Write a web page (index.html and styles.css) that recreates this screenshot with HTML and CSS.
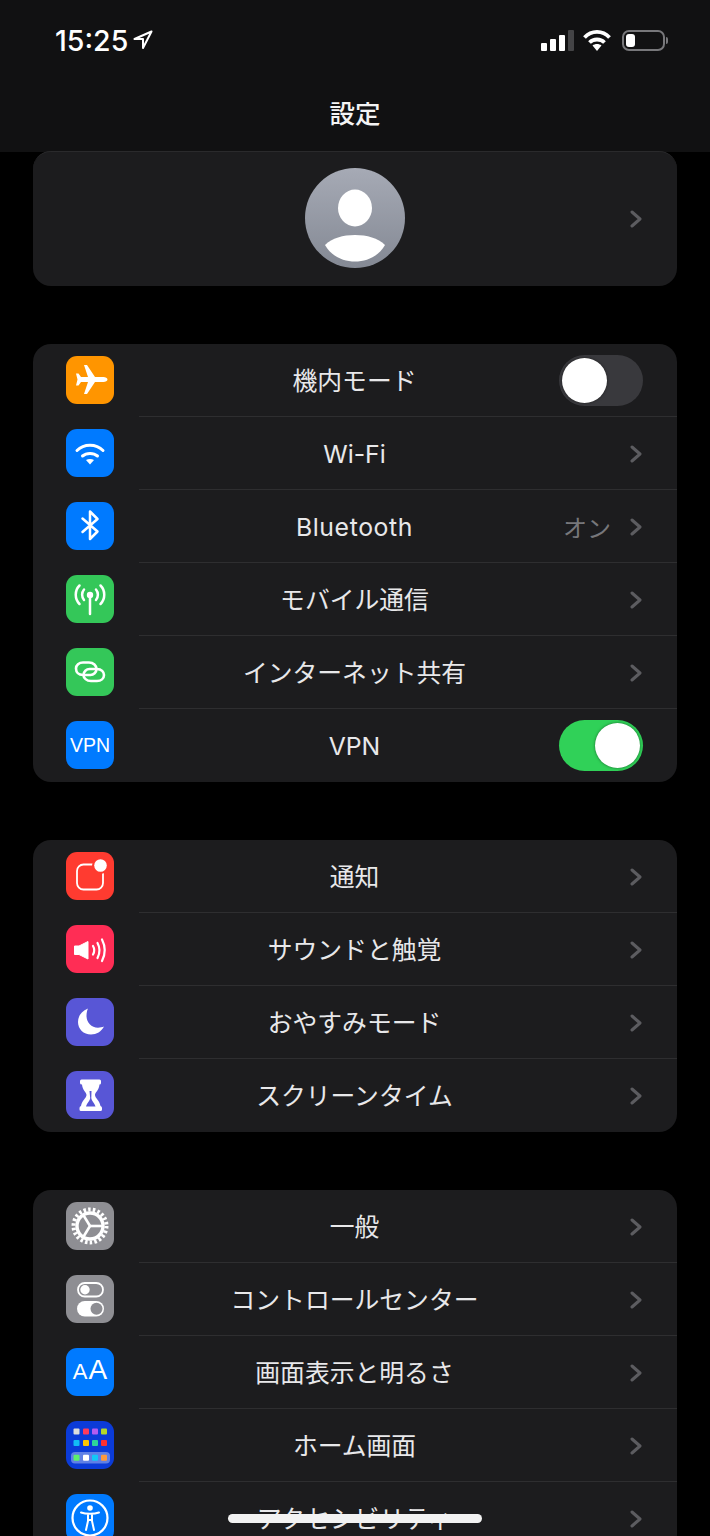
FILE: index.html
```html
<!DOCTYPE html>
<html lang="ja">
<head>
<meta charset="utf-8">
<title>設定</title>
<link rel="stylesheet" href="styles.css">
</head>
<body>
<header class="nav">
  <div class="status">
    <div class="status-left">
      <span class="time">15:25</span>
      <svg class="loc" viewBox="0 0 20 20"><path d="M18.500 1.500 L1.500 9 H10 V18 Z" fill="none" stroke="#fff" stroke-width="2" stroke-linejoin="round"/></svg>
    </div>
    <div class="status-right">
      <div class="signal"><i class="bar b1"></i><i class="bar b2"></i><i class="bar b3"></i><i class="bar b4"></i></div>
      <svg class="wifi" viewBox="0 0 28 22"><g fill="none" stroke="#fff" stroke-width="3.800"><path d="M1.500 8.500 C8.500 1 19.500 1 26.500 8.500"/><path d="M6.500 13.500 C10.500 9.500 17.500 9.500 21.500 13.500"/></g><path d="M9.500 16.500 C12 14.500 16 14.500 18.500 16.500 L14 22 Z" fill="#fff"/></svg>
      <div class="battery"><i class="charge"></i></div>
      <i class="nub"></i>
    </div>
  </div>
  <h1 class="title">設定</h1>
</header>

<section class="card profile">
  <span></span>
  <svg class="avatar" viewBox="0 0 100 100">
    <defs><linearGradient id="av" x1="0" y1="0" x2="0" y2="1"><stop offset="0" stop-color="#a6aab5"/><stop offset="1" stop-color="#848994"/></linearGradient></defs>
    <circle cx="50" cy="50" r="50" fill="url(#av)"/>
    <ellipse cx="50" cy="40" rx="17" ry="18.500" fill="#fff"/>
    <path d="M20 77 C27 70 38 67 50 67 C62 67 73 70 80 77 C74 88 62 93.500 50 93.500 C38 93.500 26 88 20 77 Z" fill="#fff"/>
  </svg>
  <div class="trail"><svg class="chev" viewBox="0 0 12 18"><path d="M2 2 L10 9 L2 16"/></svg></div>
</section>

<section class="card group">
  <div class="row">
    <svg class="tile" viewBox="0 0 48 48"><rect width="48" height="48" rx="11" fill="#ff9500"/><path d="M41.500 23.500 C41.500 22 39.500 21 37.500 21 H29 L21 9 H18 L22 21 H15 L12.500 17.500 H10 L11.500 23.500 L10 29.500 H12.500 L15 26 H22 L18 38 H21 L29 26 H37.500 C39.500 26 41.500 25 41.500 23.500 Z" fill="#fff"/></svg>
    <span class="label">機内モード</span>
    <div class="trail"><div class="toggle off"><i class="knob"></i></div></div>
  </div>
  <div class="sep"></div>
  <div class="row">
    <svg class="tile" viewBox="0 0 48 48"><rect width="48" height="48" rx="11" fill="#007aff"/><g fill="none" stroke="#fff" stroke-width="3" stroke-linecap="round"><path d="M11 21.500 C18 14.500 30 14.500 37 21.500"/><path d="M16.500 27 C20.500 23.500 27.500 23.500 31.500 27"/></g><path d="M20 31 C22.500 29.500 25.500 29.500 28 31 L24 35.500 Z" fill="#fff"/></svg>
    <span class="label">Wi-Fi</span>
    <div class="trail"><svg class="chev" viewBox="0 0 12 18"><path d="M2 2 L10 9 L2 16"/></svg></div>
  </div>
  <div class="sep"></div>
  <div class="row">
    <svg class="tile" viewBox="0 0 48 48"><rect width="48" height="48" rx="11" fill="#007aff"/><path d="M16.500 16.500 L31.500 29.500 L24 37 V9.500 L31.500 17 L16.500 30" fill="none" stroke="#fff" stroke-width="2.500" stroke-linecap="round" stroke-linejoin="round"/></svg>
    <span class="label wide">Bluetooth</span>
    <div class="trail"><span class="value">オン</span><svg class="chev" viewBox="0 0 12 18"><path d="M2 2 L10 9 L2 16"/></svg></div>
  </div>
  <div class="sep"></div>
  <div class="row">
    <svg class="tile" viewBox="0 0 48 48"><rect width="48" height="48" rx="11" fill="#34c759"/><circle cx="24" cy="20" r="3.200" fill="#fff"/><g fill="none" stroke="#fff" stroke-width="2.500" stroke-linecap="round"><path d="M24 21 V39"/><path d="M13.500 10.500 C8.500 15.500 8.500 24 13.500 29"/><path d="M18 14.500 C15.500 17.500 15.500 22 18 25"/><path d="M34.500 10.500 C39.500 15.500 39.500 24 34.500 29"/><path d="M30 14.500 C32.500 17.500 32.500 22 30 25"/></g></svg>
    <span class="label">モバイル通信</span>
    <div class="trail"><svg class="chev" viewBox="0 0 12 18"><path d="M2 2 L10 9 L2 16"/></svg></div>
  </div>
  <div class="sep"></div>
  <div class="row">
    <svg class="tile" viewBox="0 0 48 48"><rect width="48" height="48" rx="11" fill="#34c759"/><g fill="none" stroke="#fff" stroke-width="2.600" stroke-linecap="round"><path d="M17 27 C12.500 27 10 24 10 20.500 C10 17 13 14.500 17 14.500 H23 C27.500 14.500 30.500 17.500 30.500 21 C30.500 24.500 27.500 27 24.500 27 H17 Z"/><path d="M31 21 C35.500 21 38 24 38 27 C38 30.500 35 33 31 33 H25 C20.500 33 17.500 30 17.500 27 C17.500 23.500 20.500 21 23.500 21 H31 Z"/></g></svg>
    <span class="label">インターネット共有</span>
    <div class="trail"><svg class="chev" viewBox="0 0 12 18"><path d="M2 2 L10 9 L2 16"/></svg></div>
  </div>
  <div class="sep"></div>
  <div class="row">
    <div class="tile tile-blue tile-text vpn">VPN</div>
    <span class="label">VPN</span>
    <div class="trail"><div class="toggle on"><i class="knob"></i></div></div>
  </div>
</section>

<section class="card group">
  <div class="row">
    <svg class="tile" viewBox="0 0 48 48"><rect width="48" height="48" rx="11" fill="#ff3b30"/><rect x="11" y="12.500" width="26" height="25" rx="6.500" fill="none" stroke="#fff" stroke-width="1.800"/><circle cx="34.500" cy="13.500" r="8.500" fill="#ff3b30"/><circle cx="34.500" cy="13.500" r="6.300" fill="#fff"/></svg>
    <span class="label">通知</span>
    <div class="trail"><svg class="chev" viewBox="0 0 12 18"><path d="M2 2 L10 9 L2 16"/></svg></div>
  </div>
  <div class="sep"></div>
  <div class="row">
    <svg class="tile" viewBox="0 0 48 48"><rect width="48" height="48" rx="11" fill="#ff2d55"/><path d="M8.500 21 H13 L22 16.500 V34 L13 29.500 H8.500 Z" fill="#fff" stroke="#fff" stroke-width="1" stroke-linejoin="round"/><g fill="none" stroke="#fff" stroke-width="2.200" stroke-linecap="round"><path d="M27 21 Q29.500 25.300 27 29.500"/><path d="M31.500 18 Q35.500 25.300 31.500 33"/><path d="M36 14.500 Q41.500 25.300 36 36"/></g></svg>
    <span class="label">サウンドと触覚</span>
    <div class="trail"><svg class="chev" viewBox="0 0 12 18"><path d="M2 2 L10 9 L2 16"/></svg></div>
  </div>
  <div class="sep"></div>
  <div class="row">
    <svg class="tile" viewBox="0 0 48 48"><rect width="48" height="48" rx="11" fill="#5856d6"/><path d="M22 10.500 C15.500 13 12 18 12 24 C12 31 17.500 36.500 25 36.500 C30.500 36.500 35.500 33.500 38 28.500 C36.500 29.200 34 29.700 32 29.700 C25.500 29.700 20.500 24.500 20.500 18 C20.500 15 21 12.500 22 10.500 Z" fill="#fff"/></svg>
    <span class="label">おやすみモード</span>
    <div class="trail"><svg class="chev" viewBox="0 0 12 18"><path d="M2 2 L10 9 L2 16"/></svg></div>
  </div>
  <div class="sep"></div>
  <div class="row">
    <svg class="tile" viewBox="0 0 48 48"><rect width="48" height="48" rx="11" fill="#5856d6"/><path d="M15.500 8.500 H33.500 Q35 8.500 35 10 V12 Q35 13.500 33.500 13.500 C33 19.500 29 21 29 24 C29 27 33.500 29 34.500 35 Q36 35.500 36 37 V38.500 Q36 40 34.500 40 H15 Q13.500 40 13.500 38.500 V37 Q13.500 35.500 15 35 C16 29 20.500 27 20.500 24 C20.500 21 16.500 19.500 16 13.500 Q14 13.500 14 12 V10 Q14 8.500 15.500 8.500 Z" fill="#fff"/><path d="M23.500 20 H25.500 L25.300 27 C25.500 30 28.500 32 29.500 35.500 H20 C21 32 24 30 24.200 27 Z" fill="#5856d6"/></svg>
    <span class="label">スクリーンタイム</span>
    <div class="trail"><svg class="chev" viewBox="0 0 12 18"><path d="M2 2 L10 9 L2 16"/></svg></div>
  </div>
</section>

<section class="card group">
  <div class="row">
    <svg class="tile" viewBox="0 0 48 48"><rect width="48" height="48" rx="11" fill="#8e8e93"/><circle cx="24" cy="24" r="16.500" fill="none" stroke="#fff" stroke-width="4" stroke-dasharray="2.500 2.212"/><circle cx="24" cy="24" r="13" fill="none" stroke="#fff" stroke-width="3.400"/><g fill="none" stroke="#fff" stroke-width="2.600"><path d="M24 24 L17 12.500"/><path d="M24 24 H37"/><path d="M24 24 L17 35.500"/></g></svg>
    <span class="label">一般</span>
    <div class="trail"><svg class="chev" viewBox="0 0 12 18"><path d="M2 2 L10 9 L2 16"/></svg></div>
  </div>
  <div class="sep"></div>
  <div class="row">
    <svg class="tile" viewBox="0 0 48 48"><rect width="48" height="48" rx="11" fill="#8e8e93"/><rect x="12" y="8" width="25" height="13.500" rx="6.750" fill="none" stroke="#fff" stroke-width="1.800"/><circle cx="19" cy="14.750" r="4.700" fill="#fff"/><rect x="11" y="26" width="27" height="15.500" rx="7.750" fill="#fff"/><circle cx="30.500" cy="33.750" r="6" fill="#8e8e93"/></svg>
    <span class="label">コントロールセンター</span>
    <div class="trail"><svg class="chev" viewBox="0 0 12 18"><path d="M2 2 L10 9 L2 16"/></svg></div>
  </div>
  <div class="sep"></div>
  <div class="row">
    <div class="tile tile-blue tile-text aa"><span class="aa-s">A</span><span class="aa-l">A</span></div>
    <span class="label">画面表示と明るさ</span>
    <div class="trail"><svg class="chev" viewBox="0 0 12 18"><path d="M2 2 L10 9 L2 16"/></svg></div>
  </div>
  <div class="sep"></div>
  <div class="row">
    <svg class="tile" viewBox="0 0 48 48"><rect width="48" height="48" rx="11" fill="#0b3bd8"/><rect x="5" y="31" width="39" height="11.500" rx="4" fill="#5f80e6"/>
      <rect x="7.500" y="7.500" width="6" height="6" rx="1" fill="#dcdcdc"/><rect x="17" y="7.500" width="6" height="6" rx="1" fill="#ff3b5c"/><rect x="26" y="7.500" width="6" height="6" rx="1" fill="#b45cf0"/><rect x="35" y="7.500" width="6" height="6" rx="1" fill="#b4d82a"/>
      <rect x="7.500" y="19" width="6" height="6" rx="1" fill="#12bdf5"/><rect x="17" y="19" width="6" height="6" rx="1" fill="#ffc400"/><rect x="26" y="19" width="6" height="6" rx="1" fill="#2ed69a"/><rect x="35" y="19" width="6" height="6" rx="1" fill="#ff3030"/>
      <rect x="7.500" y="33.700" width="6" height="6" rx="1" fill="#5cf06c"/><rect x="17" y="33.700" width="6" height="6" rx="1" fill="#fff"/><rect x="26" y="33.700" width="6" height="6" rx="1" fill="#12c8f8"/><rect x="35" y="33.700" width="6" height="6" rx="1" fill="#ff9a3c"/></svg>
    <span class="label">ホーム画面</span>
    <div class="trail"><svg class="chev" viewBox="0 0 12 18"><path d="M2 2 L10 9 L2 16"/></svg></div>
  </div>
  <div class="sep"></div>
  <div class="row">
    <svg class="tile" viewBox="0 0 48 48"><rect width="48" height="48" rx="11" fill="#007aff"/><circle cx="24" cy="24" r="17.500" fill="none" stroke="#fff" stroke-width="2.200"/><circle cx="24" cy="14" r="2.800" fill="#fff"/><path d="M15 18.500 C20 20.300 28 20.300 33 18.500 M22 20 V27 L20 36 M26 20 V27 L28 36 M22 26 H26" fill="none" stroke="#fff" stroke-width="2" stroke-linecap="round" stroke-linejoin="round"/></svg>
    <span class="label">アクセシビリティ</span>
    <div class="trail"><svg class="chev" viewBox="0 0 12 18"><path d="M2 2 L10 9 L2 16"/></svg></div>
  </div>
</section>

<div class="home-bar"></div>
</body>
</html>
```

FILE: styles.css
```css
* { box-sizing: border-box; }
html, body { margin: 0; height: 1536px; overflow: hidden; background: #000; }
body {
  position: relative;
  width: 710px;
  color: #e8e8ea;
  font-family: Inter, "Noto Sans CJK JP", sans-serif;
}

.nav { height: 152px; background: #111112; display: flex; flex-direction: column; }
.status {
  height: 80px;
  padding: 0 42px 0 55px;
  display: flex;
  justify-content: space-between;
  align-items: center;
}
.status-left { display: flex; align-items: center; gap: 5px; }
.time { font-size: 28.500px; font-weight: 500; color: #fff; line-height: 36px; padding-top: 2px; }
.loc { width: 20px; height: 20px; }
.status-right { display: flex; align-items: center; }
.signal { display: flex; align-items: flex-end; gap: 3px; height: 21px; margin-right: 9px; }
.bar { width: 6px; background: #fff; border-radius: 1px; }
.b1 { height: 8px; }
.b2 { height: 12px; }
.b3 { height: 16px; }
.b4 { height: 21px; background: #444446; }
.wifi { width: 28px; height: 22px; margin-right: 11px; }
.battery { width: 43px; height: 21px; border: 2px solid #77777a; border-radius: 7px; padding: 2px; }
.charge { display: block; width: 9px; height: 13px; background: #fff; border-radius: 3px; }
.nub { width: 2px; height: 7px; background: #77777a; border-radius: 0 2px 2px 0; margin-left: 1px; }
.title {
  margin: 0;
  text-align: center;
  font-size: 25.500px;
  font-weight: 500;
  line-height: 68px;
  color: #f4f4f4;
}

.card { margin: 0 33px; background: #1c1c1e; border-radius: 18px; }
.profile {
  height: 135px;
  border-top: 1px solid #2a2a2c;
  padding: 16px 34px 0;
  display: grid;
  grid-template-columns: 1fr 100px 1fr;
  align-items: start;
  margin-top: -1px;
  margin-bottom: 58px;
}
.avatar { width: 100px; height: 100px; display: block; }
.profile .trail { height: 100px; }

.group { margin-bottom: 58px; padding-bottom: 1px; }
.row {
  height: 72px;
  padding: 0 34px 0 33px;
  display: grid;
  grid-template-columns: 1fr auto 1fr;
  align-items: center;
}
.sep { height: 1px; margin-left: 106px; background: #2e2e30; }
.tile { width: 48px; height: 48px; display: block; }
.tile-blue { background: #007aff; border-radius: 11px; }
.tile-text {
  display: flex;
  align-items: center;
  justify-content: center;
  color: #fff;
  font-family: "Liberation Sans", sans-serif;
}
.vpn { font-size: 19.500px; }
.aa { align-items: baseline; padding-top: 6px; gap: 1px; }
.aa-s { font-size: 22px; }
.aa-l { font-size: 28px; }

.label { font-size: 24.800px; font-weight: 400; line-height: 30px; padding-top: 2px; }
.wide { letter-spacing: 0.6px; }
.trail { display: flex; justify-content: flex-end; align-items: center; }
.value { font-size: 24px; color: #77777b; margin-right: 19px; padding-top: 1px; }
.chev { width: 12px; height: 18px; margin: 1px 1px 0 0; }
.chev path { fill: none; stroke: #5c5c60; stroke-width: 3; stroke-linecap: round; stroke-linejoin: round; }

.toggle { width: 84px; height: 51px; border-radius: 26px; padding: 3px; display: flex; }
.off { background: #39393d; justify-content: flex-start; }
.on { background: #30d158; justify-content: flex-end; }
.knob { width: 45px; height: 45px; border-radius: 50%; background: #fff; box-shadow: 0 0 3px rgba(0, 0, 0, 0.5); }

.home-bar {
  position: absolute;
  left: 228px;
  top: 1514px;
  width: 254px;
  height: 9px;
  border-radius: 5px;
  background: #f2f2f2;
}
```
